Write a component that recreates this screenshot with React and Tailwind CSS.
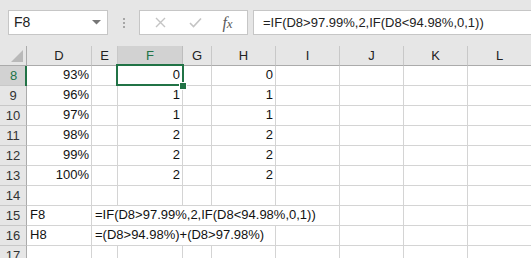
import React from "react";

const COLS = ["D", "E", "F", "G", "H", "I", "J", "K", "L"];

const rows = [
  { n: 8, d: "93%", f: "0", h: "0" },
  { n: 9, d: "96%", f: "1", h: "1" },
  { n: 10, d: "97%", f: "1", h: "1" },
  { n: 11, d: "98%", f: "2", h: "2" },
  { n: 12, d: "99%", f: "2", h: "2" },
  { n: 13, d: "100%", f: "2", h: "2" },
];

const cell = "h-[20px] border-r border-b border-[#d4d4d4] flex items-end pb-[1px] overflow-visible whitespace-nowrap";
const rowHead = "h-[20px] border-r border-b border-r-[#ababab] border-b-[#c8c8c8] bg-[#e6e6e6] flex items-center justify-center text-[13px] text-[#333]";

function RowHeader({ n, selected }) {
  if (selected) {
    return (
      <div className="h-[20px] border-b border-b-[#c8c8c8] bg-[#d2d2d2] flex items-center justify-center text-[13px] text-[#217346] relative">
        {n}
        <div className="absolute right-0 top-0 bottom-[-1px] w-[2px] bg-[#217346]" />
      </div>
    );
  }
  return <div className={rowHead}>{n}</div>;
}

export default function App() {
  return (
    <div
      className="w-[531px] h-[258px] overflow-hidden bg-white relative"
      style={{ fontFamily: '"Liberation Sans", Arial, sans-serif' }}
    >
      {/* Toolbar */}
      <div className="h-[46px] bg-[#e6e6e6] flex items-start pt-[10px]">
        <div className="ml-[8px] w-[100px] h-[25px] bg-white border border-[#c6c6c6] flex items-center pl-[5px] pr-[6px] justify-between">
          <span className="text-[14px] text-[#222]">F8</span>
          <svg width="9" height="5" viewBox="0 0 9 5">
            <path d="M0 0 H9 L4.5 4.5 Z" fill="#767676" />
          </svg>
        </div>
        <div className="w-[31px] h-[25px] flex flex-col items-center justify-center gap-[2px]">
          <div className="w-[2px] h-[2px] bg-[#a6a6a6]" />
          <div className="w-[2px] h-[2px] bg-[#a6a6a6]" />
          <div className="w-[2px] h-[2px] bg-[#a6a6a6]" />
        </div>
        <div className="w-[109px] h-[25px] bg-white border border-[#c6c6c6] flex items-center">
          <div className="w-[38px] flex justify-center pl-[2px]">
            <svg width="11" height="11" viewBox="0 0 11 11">
              <path d="M1 1 L10 10 M10 1 L1 10" stroke="#c4c4c4" strokeWidth="1.4" />
            </svg>
          </div>
          <div className="w-[34px] flex justify-center">
            <svg width="13" height="11" viewBox="0 0 13 11">
              <path d="M1 6 L4.5 9.5 L12 1.5" stroke="#c4c4c4" strokeWidth="1.6" fill="none" />
            </svg>
          </div>
          <div className="flex-1 flex justify-center pr-[4px]">
            <span
              className="italic text-[16px] text-[#5a5a5a] leading-none"
              style={{ fontFamily: '"Liberation Serif", "Times New Roman", serif' }}
            >
              f<span className="text-[13px]">x</span>
            </span>
          </div>
        </div>
        <div className="ml-[5px] flex-1 h-[25px] bg-white border border-r-0 border-[#c6c6c6] flex items-center pl-[9px] text-[13px] text-[#222] whitespace-nowrap">
          =IF(D8&gt;97.99%,2,IF(D8&lt;94.98%,0,1))
        </div>
      </div>

      {/* Grid */}
      <div className="grid grid-cols-[27px_65px_26px_65px_29px_64px_64px_64px_64px_64px] text-[13px] text-[#111]">
        {/* Header row */}
        <div className="h-[20px] bg-[#e6e6e6] border-r border-b border-r-[#ababab] border-b-[#ababab] relative">
          <svg className="absolute right-[3px] bottom-[3px]" width="12" height="12" viewBox="0 0 12 12">
            <path d="M12 0 V12 H0 Z" fill="#b9b9b9" />
          </svg>
        </div>
        {COLS.map((c) =>
          c === "F" ? (
            <div
              key={c}
              className="h-[20px] bg-[#d2d2d2] border-r border-r-[#bdbdbd] flex items-center justify-center text-[#217346] relative"
            >
              {c}
              <div className="absolute left-0 right-[-1px] bottom-0 h-[2px] bg-[#217346]" />
            </div>
          ) : (
            <div
              key={c}
              className="h-[20px] bg-[#e6e6e6] border-r border-b border-r-[#c8c8c8] border-b-[#ababab] flex items-center justify-center text-[#222]"
            >
              {c}
            </div>
          )
        )}

        {/* Data rows */}
        {rows.map((r) => (
          <React.Fragment key={r.n}>
            <RowHeader n={r.n} selected={r.n === 8} />
            <div className={`${cell} justify-end pr-[2px]`}>{r.d}</div>
            <div className={cell} />
            <div className={`${cell} justify-end pr-[2px] relative`}>
              {r.f}
              {r.n === 8 && (
                <>
                  <div className="absolute left-[-2px] top-[-2px] w-[68px] h-[22px] border-2 border-[#217346]" />
                  <div className="absolute right-[-5px] bottom-[-5px] w-[8px] h-[8px] bg-[#217346] border border-white z-10" />
                </>
              )}
            </div>
            <div className={cell} />
            <div className={`${cell} justify-end pr-[2px]`}>{r.h}</div>
            <div className={cell} />
            <div className={cell} />
            <div className={cell} />
            <div className={cell} />
          </React.Fragment>
        ))}

        {/* Row 14 */}
        <RowHeader n={14} />
        {COLS.map((c) => (
          <div key={c} className={cell} />
        ))}

        {/* Row 15 */}
        <RowHeader n={15} />
        <div className={`${cell} pl-[3px]`}>F8</div>
        <div className={`${cell} col-span-5 pl-[3px]`}>=IF(D8&gt;97.99%,2,IF(D8&lt;94.98%,0,1))</div>
        <div className={cell} />
        <div className={cell} />
        <div className={cell} />

        {/* Row 16 */}
        <RowHeader n={16} />
        <div className={`${cell} pl-[3px]`}>H8</div>
        <div className={`${cell} col-span-4 pl-[3px]`}>=(D8&gt;94.98%)+(D8&gt;97.98%)</div>
        <div className={cell} />
        <div className={cell} />
        <div className={cell} />
        <div className={cell} />

        {/* Row 17 */}
        <RowHeader n={17} />
        {COLS.map((c) => (
          <div key={c} className={cell} />
        ))}
      </div>
    </div>
  );
}
